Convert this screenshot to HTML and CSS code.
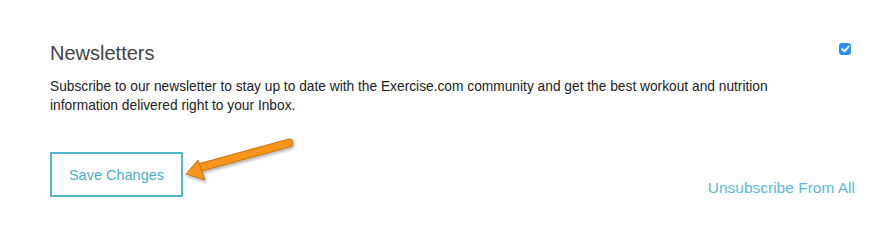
FILE: index.html
```html
<!DOCTYPE html>
<html>
<head>
<meta charset="utf-8">
<link rel="stylesheet" href="styles.css">
</head>
<body>
<div class="panel">
  <div class="head-row">
    <h2 class="title">Newsletters</h2>
    <span class="check"><svg width="9" height="8" viewBox="0 0 9 8"><path d="M1.2 4.2 L3.5 6.4 L7.8 1.4" fill="none" stroke="#fff" stroke-width="1.8" stroke-linecap="round" stroke-linejoin="round"/></svg></span>
  </div>
  <p class="desc">Subscribe to our newsletter to stay up to date with the Exercise.com community and get the best workout and nutrition information delivered right to your Inbox.</p>
  <div class="actions">
    <button class="save">Save Changes</button>
    <a class="unsub" href="#">Unsubscribe From All</a>
  </div>
  <svg class="arrow" width="891" height="247" viewBox="0 0 891 247">
    <defs>
      <filter id="sh" x="-20%" y="-20%" width="140%" height="160%">
        <feDropShadow dx="1" dy="2" stdDeviation="1.5" flood-color="#000" flood-opacity="0.3"/>
      </filter>
    </defs>
    <g filter="url(#sh)">
      <path d="M289 143 L198 168" stroke="#c97612" stroke-width="9" stroke-linecap="round"/>
      <path d="M289 143 L198 168" stroke="#f7941e" stroke-width="7" stroke-linecap="round"/>
      <path d="M186 174 L198 160 L205 180 Z" fill="#f7941e" stroke="#c97612" stroke-width="1" stroke-linejoin="round"/>
    </g>
  </svg>
</div>
</body>
</html>
```
FILE: styles.css
```css
html, body {
  margin: 0;
  padding: 0;
  background: #fff;
}
body {
  font-family: "Liberation Sans", Arial, Helvetica, sans-serif;
  width: 891px;
  height: 247px;
  overflow: hidden;
}
.panel {
  position: relative;
  padding: 40px 36px 0 50px;
}
.head-row {
  display: flex;
  justify-content: space-between;
  align-items: flex-start;
}
.title {
  margin: 0;
  font-size: 20px;
  font-weight: normal;
  color: #444;
  line-height: 26px;
}
.check {
  margin-top: 3px;
  margin-right: 4px;
  width: 12px;
  height: 12px;
  border-radius: 3px;
  background: #2b8ef4;
  display: flex;
  align-items: center;
  justify-content: center;
}
.desc {
  margin: 11px 0 0 0;
  font-size: 13.75px;
  line-height: 19px;
  color: #222;
  width: 740px;
}
.actions {
  margin-top: 37px;
  display: flex;
  justify-content: space-between;
  align-items: flex-end;
}
.save {
  width: 133px;
  height: 45px;
  border: 2px solid #4fb8cf;
  background: #fff;
  color: #4aaec8;
  font-family: "Liberation Sans", Arial, Helvetica, sans-serif;
  font-size: 14.5px;
  padding: 0;
  border-radius: 1px;
}
.unsub {
  color: #5cb8d6;
  font-size: 15.5px;
  text-decoration: none;
  margin-bottom: -1px;
  line-height: 20px;
}
.arrow {
  position: absolute;
  left: 0;
  top: 0;
  pointer-events: none;
}
```
